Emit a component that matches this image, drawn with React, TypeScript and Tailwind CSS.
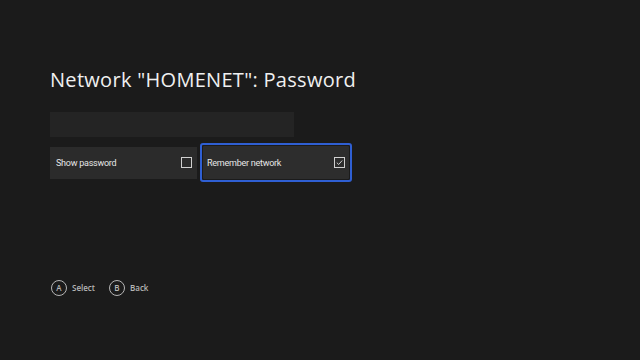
export default function App() {
  return (
    <div
      className="w-[640px] h-[360px] bg-[#1b1b1b] text-white overflow-hidden flex flex-col"
      style={{ fontFamily: '"Open Sans", "Noto Sans", sans-serif' }}
    >
      <div className="pl-[50px] pt-[66px]">
        <h1 className="text-[20px] leading-[28px] text-[#f0f0f0] tracking-[0.3px]">
          Network "HOMENET": Password
        </h1>

        {/* password field */}
        <div className="mt-[18px] w-[244px] h-[25px] bg-[#242424]" />

        {/* toggles */}
        <div
          className="mt-[6px] flex items-center gap-[3px]"
          style={{ fontFamily: 'Roboto, "Open Sans", sans-serif' }}
        >
          <div className="w-[147px] h-[32px] bg-[#2b2b2b] flex items-center justify-between pl-[6px] pr-[5px]">
            <span className="pt-[2px] text-[9px] tracking-[-0.25px] text-[#e6e6e6]">Show password</span>
            <span className="w-[11px] h-[11px] border border-[#d0d0d0]" />
          </div>
          <div className="w-[152px] h-[39px] rounded-[3px] border-2 border-[#2f5fd3] p-px">
            <div className="w-full h-full bg-[#2d2d2d] rounded-[1px] flex items-center justify-between pl-[4px] pr-[4px]">
              <span className="pt-[2px] text-[9px] tracking-[-0.25px] text-[#e6e6e6]">Remember network</span>
              <span className="w-[11px] h-[11px] border border-[#d0d0d0] flex items-center justify-center">
                <svg viewBox="0 0 10 10" className="w-[9px] h-[9px]" fill="none" stroke="#e0e0e0" strokeWidth="1">
                  <path d="M2 5.2 L4.1 7.2 L8 2.8" />
                </svg>
              </span>
            </div>
          </div>
        </div>
      </div>

      {/* footer hints */}
      <div className="mt-auto mb-[64px] pl-[51px] flex items-center gap-[14px] text-[8px] font-semibold text-[#b5b5b5]">
        <div className="flex items-center gap-[5px]">
          <span className="w-[16px] h-[16px] rounded-full border border-[#b5b5b5] flex items-center justify-center text-[8px]">A</span>
          <span>Select</span>
        </div>
        <div className="flex items-center gap-[5px]">
          <span className="w-[16px] h-[16px] rounded-full border border-[#b5b5b5] flex items-center justify-center text-[8px]">B</span>
          <span>Back</span>
        </div>
      </div>
    </div>
  );
}
